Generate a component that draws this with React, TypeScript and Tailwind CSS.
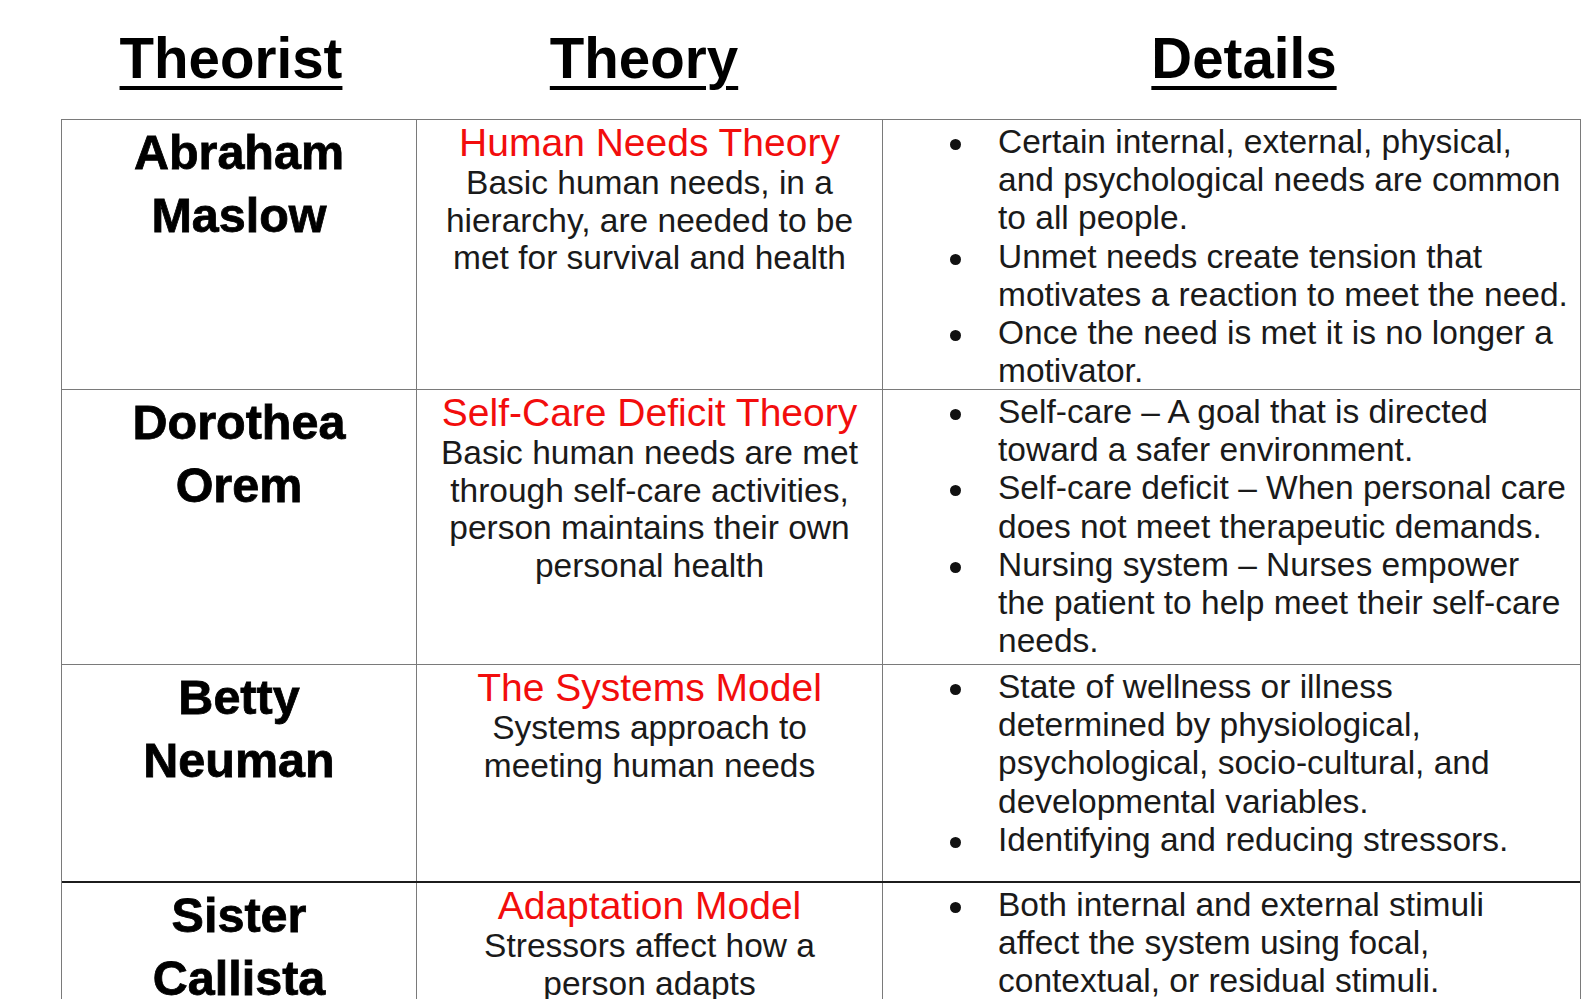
const rows = [
  {
    name: ['Abraham', 'Maslow'],
    theory: 'Human Needs Theory',
    desc: ['Basic human needs, in a', 'hierarchy, are needed to be', 'met for survival and health'],
    details: [
      ['Certain internal, external, physical,', 'and psychological needs are common', 'to all people.'],
      ['Unmet needs create tension that', 'motivates a reaction to meet the need.'],
      ['Once the need is met it is no longer a', 'motivator.'],
    ],
    rowClass: 'h-[270px] border-b border-[#7a7a7a]',
  },
  {
    name: ['Dorothea', 'Orem'],
    theory: 'Self-Care Deficit Theory',
    desc: ['Basic human needs are met', 'through self-care activities,', 'person maintains their own', 'personal health'],
    details: [
      ['Self-care – A goal that is directed', 'toward a safer environment.'],
      ['Self-care deficit – When personal care', 'does not meet therapeutic demands.'],
      ['Nursing system – Nurses empower', 'the patient to help meet their self-care', 'needs.'],
    ],
    rowClass: 'h-[275px] border-b border-[#7a7a7a]',
  },
  {
    name: ['Betty', 'Neuman'],
    theory: 'The Systems Model',
    desc: ['Systems approach to', 'meeting human needs'],
    details: [
      ['State of wellness or illness', 'determined by physiological,', 'psychological, socio-cultural, and', 'developmental variables.'],
      ['Identifying and reducing stressors.'],
    ],
    rowClass: 'h-[218px] border-b-2 border-[#1c1c1c]',
  },
  {
    name: ['Sister', 'Callista'],
    theory: 'Adaptation Model',
    desc: ['Stressors affect how a', 'person adapts'],
    details: [
      ['Both internal and external stimuli', 'affect the system using focal,', 'contextual, or residual stimuli.'],
    ],
    rowClass: 'h-[200px]',
  },
];

function Lines({ lines }: { lines: string[] }) {
  return (
    <>
      {lines.map((l, i) => (
        <span key={i} className="block whitespace-nowrap">
          {l}
        </span>
      ))}
    </>
  );
}

export default function App() {
  return (
    <div className="h-screen w-full overflow-hidden bg-white font-['Liberation_Sans',Arial,sans-serif] text-black">
      {/* Column headings */}
      <div className="ml-[61px] flex w-[1520px] pt-[31px] pb-[32px] text-[56.5px] font-bold leading-[56px]">
        <div className="flex w-[355px] justify-center pr-[15px]">
          <span className="underline decoration-[4px] underline-offset-[8px]">Theorist</span>
        </div>
        <div className="flex w-[466px] justify-center pr-[10px]">
          <span className="underline decoration-[4px] underline-offset-[8px]">Theory</span>
        </div>
        <div className="flex flex-1 justify-center pl-[25px]">
          <span className="underline decoration-[4px] underline-offset-[8px]">Details</span>
        </div>
      </div>

      {/* Table */}
      <div className="ml-[61px] w-[1520px] border-x border-t border-[#7a7a7a]">
        {rows.map((row) => (
          <div key={row.theory} className={`flex ${row.rowClass}`}>
            <div className="w-[355px] shrink-0 border-r border-[#7a7a7a] pt-px text-center text-[48.5px] font-bold leading-[63px] [-webkit-text-stroke:0.8px_#000]">
              <Lines lines={row.name} />
            </div>
            <div className="w-[466px] shrink-0 border-r border-[#7a7a7a] pt-px text-center">
              <div className="text-[39px] leading-[43px] text-[#f20d0d]">{row.theory}</div>
              <div className="text-[33.5px] leading-[37.5px] text-[#1a1a1a]">
                <Lines lines={row.desc} />
              </div>
            </div>
            <ul className="flex-1 pt-[3px] pl-[67px] text-[33.5px] leading-[38.2px] text-[#1a1a1a]">
              {row.details.map((item, i) => (
                <li key={i} className="flex">
                  <span className="mt-[16px] mr-[37px] h-[11px] w-[11px] shrink-0 rounded-full bg-[#111]" />
                  <div>
                    <Lines lines={item} />
                  </div>
                </li>
              ))}
            </ul>
          </div>
        ))}
      </div>
    </div>
  );
}
